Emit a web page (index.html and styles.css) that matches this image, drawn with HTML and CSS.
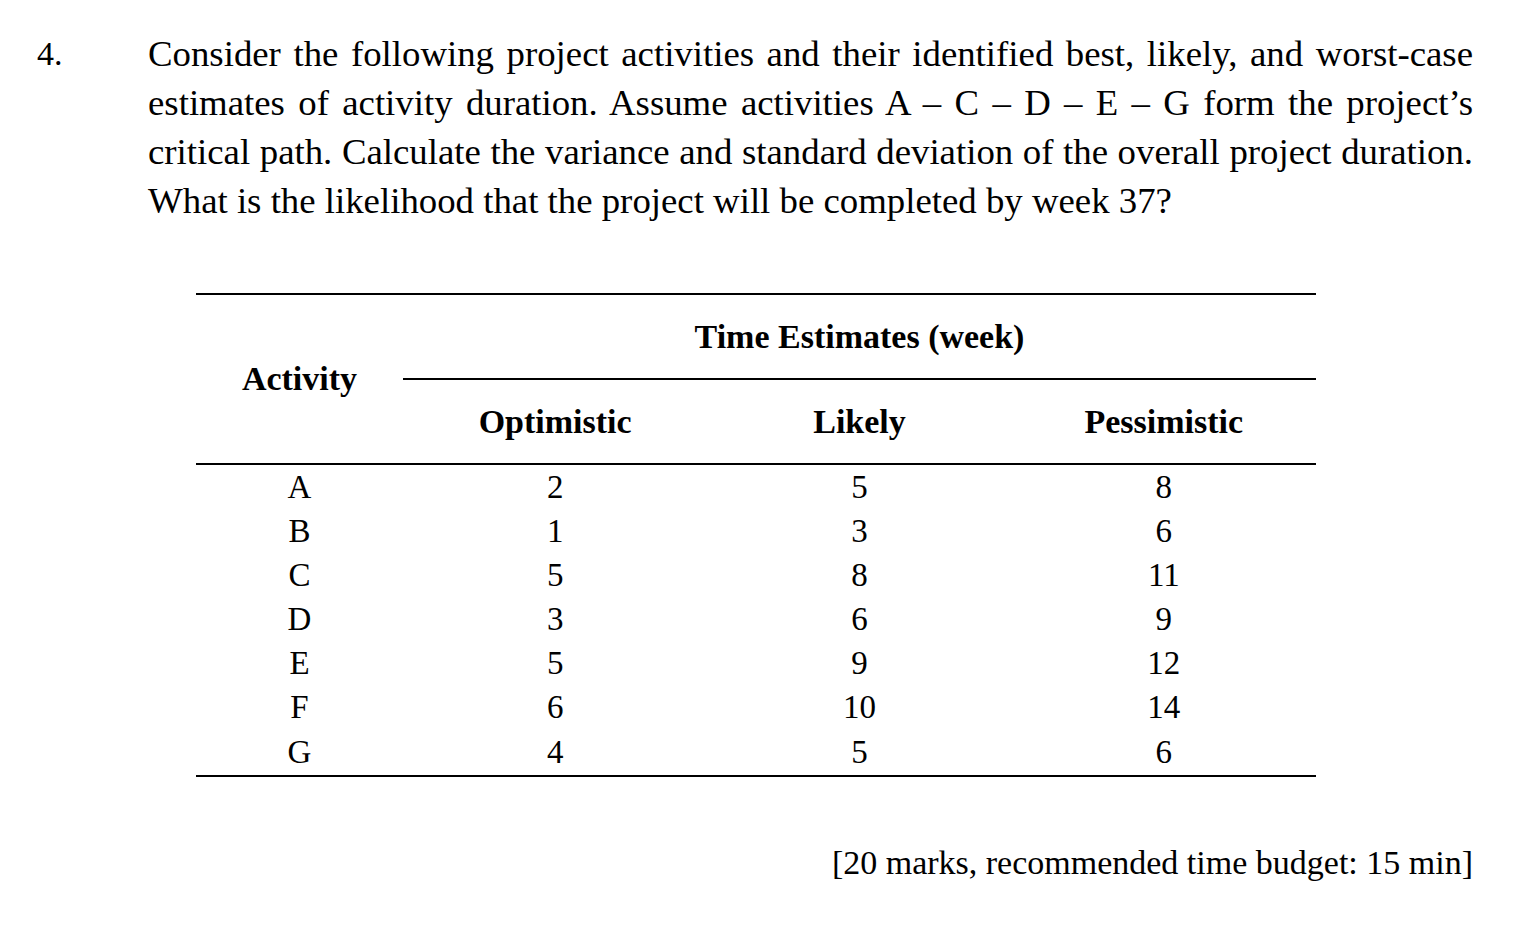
FILE: index.html
```html
<!DOCTYPE html>
<html lang="en">
<head>
<meta charset="utf-8">
<title>Question 4</title>
<link rel="stylesheet" href="styles.css">
</head>
<body>
<div class="page">
  <div class="question">
    <div class="qnum">4.</div>
    <div class="qbody">
      <p class="qtext"><span class="justified">Consider the following project activities and their identified best, likely, and worst-case estimates of activity duration. Assume activities A &ndash; C &ndash; D &ndash; E &ndash; G form the project&rsquo;s critical path. Calculate the variance and standard deviation of the overall project duration.</span> <span class="lastline">What is the likelihood that the project will be completed by week 37?</span></p>
    </div>
  </div>

  <div class="table-wrap">
    <table class="est">
      <thead>
        <tr>
          <th class="act" rowspan="2">Activity</th>
          <th class="group" colspan="3">Time Estimates (week)</th>
        </tr>
        <tr class="sub">
          <th>Optimistic</th>
          <th>Likely</th>
          <th>Pessimistic</th>
        </tr>
      </thead>
      <tbody>
        <tr><td>A</td><td>2</td><td>5</td><td>8</td></tr>
        <tr><td>B</td><td>1</td><td>3</td><td>6</td></tr>
        <tr><td>C</td><td>5</td><td>8</td><td>11</td></tr>
        <tr><td>D</td><td>3</td><td>6</td><td>9</td></tr>
        <tr><td>E</td><td>5</td><td>9</td><td>12</td></tr>
        <tr><td>F</td><td>6</td><td>10</td><td>14</td></tr>
        <tr><td>G</td><td>4</td><td>5</td><td>6</td></tr>
      </tbody>
    </table>
  </div>

  <div class="marks">[20 marks, recommended time budget: 15 min]</div>
</div>
</body>
</html>
```

FILE: styles.css
```css
html, body {
  margin: 0;
  padding: 0;
  background: #ffffff;
}

body {
  font-family: "Liberation Serif", "Times New Roman", serif;
  color: #000000;
}

.page {
  width: 1518px;
  height: 940px;
  overflow: hidden;
}

.question {
  display: flex;
  padding-top: 29px;
}

.qnum {
  width: 111px;
  padding-left: 37px;
  font-size: 34px;
  line-height: 49px;
}

.qbody {
  width: 1325px;
}

.qtext {
  margin: 0;
  font-size: 36.8px;
  line-height: 49px;
}

.justified {
  display: block;
  text-align: justify;
  text-align-last: justify;
}

.lastline {
  display: block;
  text-align: left;
}

.table-wrap {
  padding-left: 196px;
  padding-top: 68px;
}

.est {
  width: 1120px;
  border-collapse: collapse;
  table-layout: fixed;
}

.est th {
  font-weight: bold;
  font-size: 34px;
  padding: 0;
}

.est thead tr:first-child th {
  border-top: 2px solid #000;
  height: 83px;
}

.est th.act {
  width: 207px;
  border-bottom: 2px solid #000;
}

.est th.group {
  border-bottom: 2px solid #000;
}

.est tr.sub th {
  height: 83px;
  border-bottom: 2px solid #000;
}

.est td {
  font-size: 33px;
  line-height: 38px;
  text-align: center;
  height: 44px;
  padding: 0;
}

.est tbody tr:last-child td {
  height: 46px;
  border-bottom: 2px solid #000;
}

.marks {
  padding-top: 67px;
  padding-right: 45px;
  text-align: right;
  font-size: 34px;
}
```
